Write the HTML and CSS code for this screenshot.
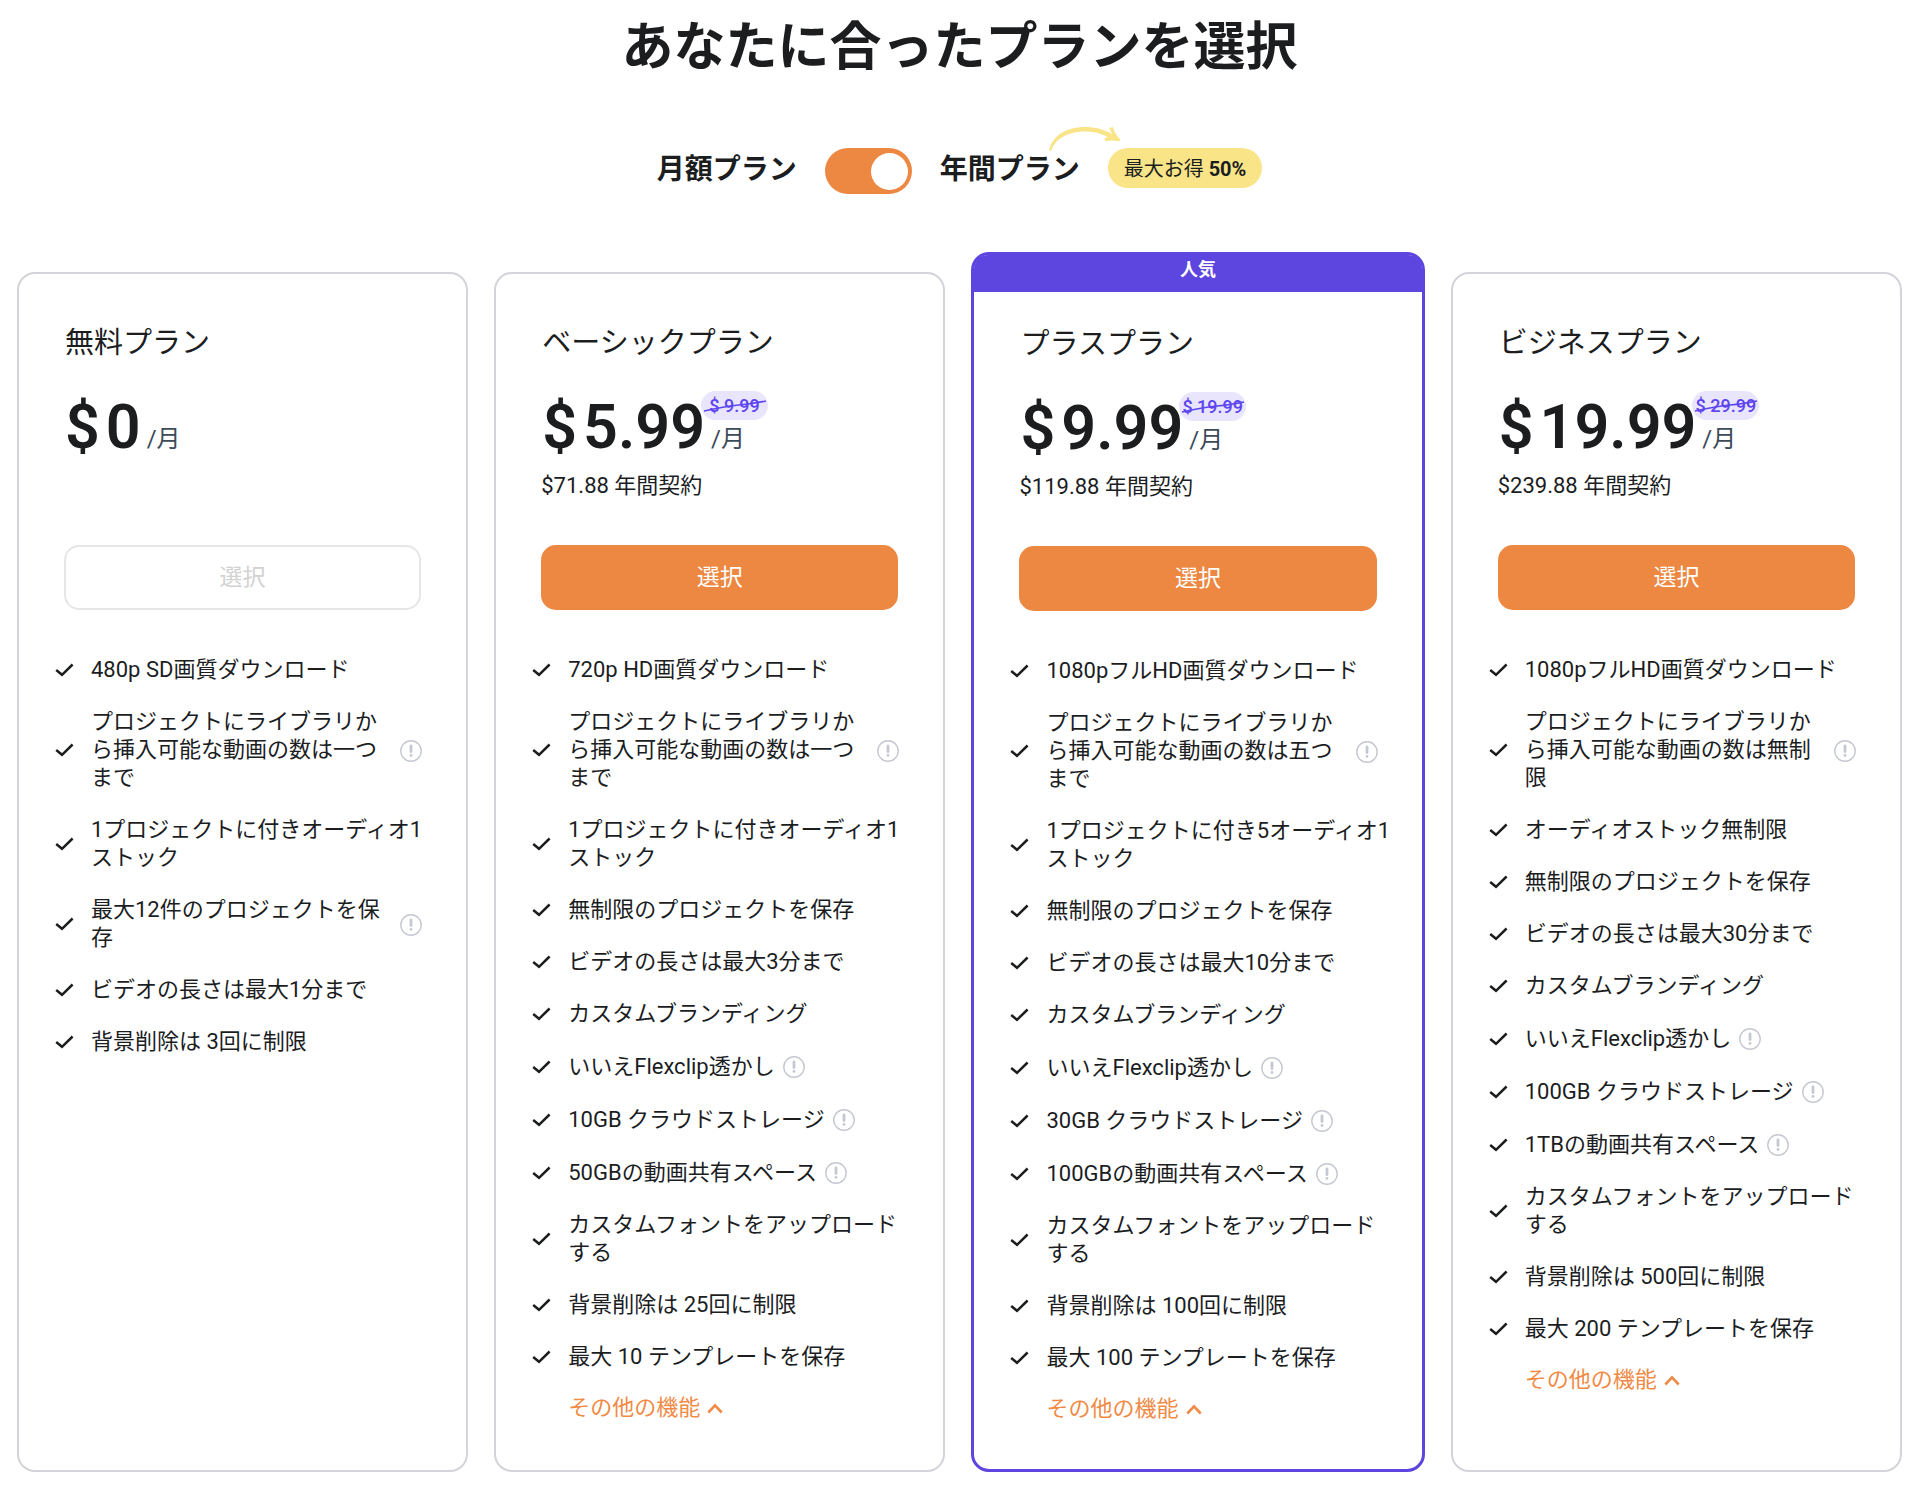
FILE: index.html
```
<!DOCTYPE html>
<html lang="ja">
<head>
<meta charset="utf-8">
<meta name="viewport" content="width=device-width, initial-scale=1">
<title>あなたに合ったプランを選択</title>
<link rel="stylesheet" href="styles.css">
</head>
<body>
<svg class="sprite" aria-hidden="true">
  <symbol id="check" viewBox="0 0 19 14"><path d="M1.2 7 7 11.8 17.6 1.5" fill="none" stroke="currentColor" stroke-width="2.5"/></symbol>
  <symbol id="info" viewBox="0 0 22 22"><circle cx="11" cy="11" r="10.2" fill="none" stroke="currentColor" stroke-width="1.4"/><path d="M11 6v5.6" stroke="currentColor" stroke-width="2.8" stroke-linecap="round"/><circle cx="11" cy="15.4" r="1.4" fill="currentColor"/></symbol>
  <symbol id="chevron" viewBox="0 0 16 11"><path d="M1.3 9.5 8 2.4l6.7 7.1" fill="none" stroke="currentColor" stroke-width="2.6"/></symbol>
  <symbol id="strike" viewBox="0 0 64 12" preserveAspectRatio="none"><path d="M1 11Q24 6 36 5T63 1" fill="none" stroke="currentColor" stroke-width="1.6"/></symbol>
</svg>

<main class="pricing">
  <header class="intro">
    <h1 class="intro-title">あなたに合ったプランを選択</h1>
    <div class="billing">
      <label class="billing-label" for="billing">月額プラン</label>
      <input class="billing-switch" id="billing" type="checkbox" role="switch" checked>
      <label class="billing-label" for="billing">年間プラン</label>
      <div class="saving">
        <svg class="saving-arrow" viewBox="0 0 72 27" aria-hidden="true"><path d="M1 24.5C5 8 20 1 38 1C50 1 60 5 67 10L64 14C57 9 49 5.5 38 5.5C22 5.5 8 11 3.5 24.5Z" fill="currentColor"/><path d="M63 1.5Q65 8 69.5 13.2Q63 12.2 57 13.6" fill="none" stroke="currentColor" stroke-width="3.4"/></svg>
        最大お得 <strong>50%</strong>
      </div>
    </div>
  </header>

  <div class="plans">
    <section class="plan">
      <div class="plan-body">
        <h2 class="plan-name">無料プラン</h2>
        <div class="price"><span class="currency">$</span><span class="amount">0</span><div class="suffix"><span class="unit">/月</span></div></div>
        <p class="annual"></p>
        <button class="select" type="button" disabled>選択</button>
        <ul class="features">
          <li class="feature"><svg class="check"><use href="#check"/></svg><span>480p SD画質ダウンロード</span></li>
          <li class="feature feature-wide"><svg class="check"><use href="#check"/></svg><span>プロジェクトにライブラリから挿入可能な動画の数は一つまで</span><button class="info" type="button" aria-label="詳細"><svg><use href="#info"/></svg></button></li>
          <li class="feature"><svg class="check"><use href="#check"/></svg><span>1プロジェクトに付きオーディオ1ストック</span></li>
          <li class="feature feature-wide"><svg class="check"><use href="#check"/></svg><span>最大12件のプロジェクトを保存</span><button class="info" type="button" aria-label="詳細"><svg><use href="#info"/></svg></button></li>
          <li class="feature"><svg class="check"><use href="#check"/></svg><span>ビデオの長さは最大1分まで</span></li>
          <li class="feature"><svg class="check"><use href="#check"/></svg><span>背景削除は 3回に制限</span></li>
        </ul>
      </div>
    </section>

    <section class="plan">
      <div class="plan-body">
        <h2 class="plan-name">ベーシックプラン</h2>
        <div class="price"><span class="currency">$</span><span class="amount">5.99</span><div class="suffix"><del class="was">$ 9.99<svg class="strike"><use href="#strike"/></svg></del><span class="unit">/月</span></div></div>
        <p class="annual">$71.88 年間契約</p>
        <button class="select" type="button">選択</button>
        <ul class="features">
          <li class="feature"><svg class="check"><use href="#check"/></svg><span>720p HD画質ダウンロード</span></li>
          <li class="feature feature-wide"><svg class="check"><use href="#check"/></svg><span>プロジェクトにライブラリから挿入可能な動画の数は一つまで</span><button class="info" type="button" aria-label="詳細"><svg><use href="#info"/></svg></button></li>
          <li class="feature"><svg class="check"><use href="#check"/></svg><span>1プロジェクトに付きオーディオ1ストック</span></li>
          <li class="feature"><svg class="check"><use href="#check"/></svg><span>無制限のプロジェクトを保存</span></li>
          <li class="feature"><svg class="check"><use href="#check"/></svg><span>ビデオの長さは最大3分まで</span></li>
          <li class="feature"><svg class="check"><use href="#check"/></svg><span>カスタムブランディング</span></li>
          <li class="feature"><svg class="check"><use href="#check"/></svg><span>いいえFlexclip透かし</span><button class="info" type="button" aria-label="詳細"><svg><use href="#info"/></svg></button></li>
          <li class="feature"><svg class="check"><use href="#check"/></svg><span>10GB クラウドストレージ</span><button class="info" type="button" aria-label="詳細"><svg><use href="#info"/></svg></button></li>
          <li class="feature"><svg class="check"><use href="#check"/></svg><span>50GBの動画共有スペース</span><button class="info" type="button" aria-label="詳細"><svg><use href="#info"/></svg></button></li>
          <li class="feature"><svg class="check"><use href="#check"/></svg><span>カスタムフォントをアップロードする</span></li>
          <li class="feature"><svg class="check"><use href="#check"/></svg><span>背景削除は 25回に制限</span></li>
          <li class="feature"><svg class="check"><use href="#check"/></svg><span>最大 10 テンプレートを保存</span></li>
        </ul>
        <button class="more" type="button">その他の機能<svg><use href="#chevron"/></svg></button>
      </div>
    </section>

    <section class="plan plan-popular">
      <div class="ribbon">人気</div>
      <div class="plan-body">
        <h2 class="plan-name">プラスプラン</h2>
        <div class="price"><span class="currency">$</span><span class="amount">9.99</span><div class="suffix"><del class="was">$ 19.99<svg class="strike"><use href="#strike"/></svg></del><span class="unit">/月</span></div></div>
        <p class="annual">$119.88 年間契約</p>
        <button class="select" type="button">選択</button>
        <ul class="features">
          <li class="feature"><svg class="check"><use href="#check"/></svg><span>1080pフルHD画質ダウンロード</span></li>
          <li class="feature feature-wide"><svg class="check"><use href="#check"/></svg><span>プロジェクトにライブラリから挿入可能な動画の数は五つまで</span><button class="info" type="button" aria-label="詳細"><svg><use href="#info"/></svg></button></li>
          <li class="feature"><svg class="check"><use href="#check"/></svg><span>1プロジェクトに付き5オーディオ1ストック</span></li>
          <li class="feature"><svg class="check"><use href="#check"/></svg><span>無制限のプロジェクトを保存</span></li>
          <li class="feature"><svg class="check"><use href="#check"/></svg><span>ビデオの長さは最大10分まで</span></li>
          <li class="feature"><svg class="check"><use href="#check"/></svg><span>カスタムブランディング</span></li>
          <li class="feature"><svg class="check"><use href="#check"/></svg><span>いいえFlexclip透かし</span><button class="info" type="button" aria-label="詳細"><svg><use href="#info"/></svg></button></li>
          <li class="feature"><svg class="check"><use href="#check"/></svg><span>30GB クラウドストレージ</span><button class="info" type="button" aria-label="詳細"><svg><use href="#info"/></svg></button></li>
          <li class="feature"><svg class="check"><use href="#check"/></svg><span>100GBの動画共有スペース</span><button class="info" type="button" aria-label="詳細"><svg><use href="#info"/></svg></button></li>
          <li class="feature"><svg class="check"><use href="#check"/></svg><span>カスタムフォントをアップロードする</span></li>
          <li class="feature"><svg class="check"><use href="#check"/></svg><span>背景削除は 100回に制限</span></li>
          <li class="feature"><svg class="check"><use href="#check"/></svg><span>最大 100 テンプレートを保存</span></li>
        </ul>
        <button class="more" type="button">その他の機能<svg><use href="#chevron"/></svg></button>
      </div>
    </section>

    <section class="plan">
      <div class="plan-body">
        <h2 class="plan-name">ビジネスプラン</h2>
        <div class="price"><span class="currency">$</span><span class="amount">19.99</span><div class="suffix"><del class="was">$ 29.99<svg class="strike"><use href="#strike"/></svg></del><span class="unit">/月</span></div></div>
        <p class="annual">$239.88 年間契約</p>
        <button class="select" type="button">選択</button>
        <ul class="features">
          <li class="feature"><svg class="check"><use href="#check"/></svg><span>1080pフルHD画質ダウンロード</span></li>
          <li class="feature feature-wide"><svg class="check"><use href="#check"/></svg><span>プロジェクトにライブラリから挿入可能な動画の数は無制限</span><button class="info" type="button" aria-label="詳細"><svg><use href="#info"/></svg></button></li>
          <li class="feature"><svg class="check"><use href="#check"/></svg><span>オーディオストック無制限</span></li>
          <li class="feature"><svg class="check"><use href="#check"/></svg><span>無制限のプロジェクトを保存</span></li>
          <li class="feature"><svg class="check"><use href="#check"/></svg><span>ビデオの長さは最大30分まで</span></li>
          <li class="feature"><svg class="check"><use href="#check"/></svg><span>カスタムブランディング</span></li>
          <li class="feature"><svg class="check"><use href="#check"/></svg><span>いいえFlexclip透かし</span><button class="info" type="button" aria-label="詳細"><svg><use href="#info"/></svg></button></li>
          <li class="feature"><svg class="check"><use href="#check"/></svg><span>100GB クラウドストレージ</span><button class="info" type="button" aria-label="詳細"><svg><use href="#info"/></svg></button></li>
          <li class="feature"><svg class="check"><use href="#check"/></svg><span>1TBの動画共有スペース</span><button class="info" type="button" aria-label="詳細"><svg><use href="#info"/></svg></button></li>
          <li class="feature"><svg class="check"><use href="#check"/></svg><span>カスタムフォントをアップロードする</span></li>
          <li class="feature"><svg class="check"><use href="#check"/></svg><span>背景削除は 500回に制限</span></li>
          <li class="feature"><svg class="check"><use href="#check"/></svg><span>最大 200 テンプレートを保存</span></li>
        </ul>
        <button class="more" type="button">その他の機能<svg><use href="#chevron"/></svg></button>
      </div>
    </section>
  </div>
</main>
</body>
</html>
```
FILE: styles.css
```
* {
  box-sizing: border-box;
}

body {
  margin: 0;
  background: #fff;
  color: #1b1d1f;
  font-family: Roboto, "Noto Sans CJK JP", sans-serif;
  font-size: 22px;
  line-height: 28px;
}

h1, h2, p, ul {
  margin: 0;
  padding: 0;
}

button {
  padding: 0;
  border: 0;
  background: none;
  color: inherit;
  font: inherit;
  cursor: pointer;
}

.sprite {
  display: none;
}

.pricing {
  padding: 8px 18px 22px 17px;
}

/* Heading and billing switch */
.intro {
  display: flex;
  flex-direction: column;
  align-items: center;
  gap: 60px;
}

.intro-title {
  font-size: 52px;
  font-weight: 700;
  line-height: 80px;
}

.billing {
  display: flex;
  align-items: flex-start;
  gap: 28px;
}

.billing-label {
  font-size: 28px;
  font-weight: 700;
  line-height: 44px;
}

.billing-switch {
  appearance: none;
  display: flex;
  justify-content: flex-end;
  align-items: center;
  width: 87px;
  height: 46px;
  margin: 0;
  padding: 4px;
  border-radius: 23px;
  background: #ec8842;
  cursor: pointer;
}

.billing-switch::before {
  content: "";
  width: 37px;
  height: 37px;
  border-radius: 50%;
  background: #fff;
}

.billing-switch:not(:checked) {
  justify-content: flex-start;
}

.saving {
  position: relative;
  height: 40px;
  padding: 0 16px;
  border-radius: 20px;
  background: #f9e587;
  font-size: 20px;
  line-height: 43px;
}

.saving-arrow {
  position: absolute;
  left: -60px;
  top: -22px;
  width: 72px;
  height: 27px;
  color: #f9e587;
}

/* Plan cards */
.plans {
  display: grid;
  grid-template-columns: 451fr 451fr 453fr 451fr;
  gap: 26px;
  margin-top: 58px;
}

.plan {
  margin-top: 20px;
  border: 2px solid #d3d4da;
  border-radius: 18px;
}

.plan-popular {
  margin-top: 0;
  border: 3px solid #5d45e0;
}

.ribbon {
  height: 37px;
  border-radius: 14px 14px 0 0;
  background: #5d45e0;
  color: #fff;
  font-size: 18px;
  font-weight: 700;
  line-height: 30px;
  text-align: center;
}

.plan-body {
  padding: 48px 45px 46px;
}

.plan-popular .plan-body {
  padding-top: 31px;
}

.plan-name {
  padding-left: 1px;
  font-size: 29px;
  font-weight: 400;
  line-height: 42px;
}

.price {
  display: flex;
  height: 72px;
  margin-top: 27px;
  padding-left: 1px;
  font-size: 61px;
  font-weight: 600;
  line-height: 72px;
}

.currency {
  margin-right: 6px;
}

.suffix {
  display: flex;
  flex-direction: column;
  padding-bottom: 10px;
}

.unit {
  margin-top: auto;
  padding-left: 6px;
  color: #3d4b59;
  font-size: 24px;
  font-weight: 400;
  line-height: 28px;
}

.was {
  position: relative;
  width: 67px;
  margin-left: -4px;
  border-radius: 15px;
  background: #e9e5fd;
  color: #5d45f0;
  font-size: 18px;
  font-weight: 500;
  line-height: 29px;
  text-align: center;
  text-decoration: none;
}

.strike {
  position: absolute;
  left: 2px;
  top: 9px;
  width: 64px;
  height: 12px;
}

.annual {
  min-height: 28px;
  margin-top: 9px;
}

.select {
  display: block;
  width: 100%;
  height: 65px;
  margin: 45px 0 46px;
  border-radius: 15px;
  background: #ec8842;
  color: #fff;
  font-size: 23px;
}

.select:disabled {
  border: 2px solid #e6e6e6;
  background: #fff;
  color: #d2d2d2;
  cursor: default;
}

.features {
  display: flex;
  flex-direction: column;
  gap: 24px;
  margin: 0 -19px 0 -9px;
  list-style: none;
}

.feature {
  display: flex;
  align-items: center;
}

.feature-wide {
  justify-content: space-between;
  padding-right: 18px;
}

.check {
  flex: none;
  width: 19px;
  height: 14px;
  margin-right: 17px;
}

.info {
  display: flex;
  flex: none;
  margin-left: 8px;
  padding: 4px 0 3px;
  color: #c5c8d0;
}

.info svg {
  width: 22px;
  height: 22px;
}

.more {
  display: flex;
  align-items: center;
  gap: 7px;
  margin: 23px 0 0 27px;
  color: #f08a45;
}

.more svg {
  width: 16px;
  height: 11px;
}
```
